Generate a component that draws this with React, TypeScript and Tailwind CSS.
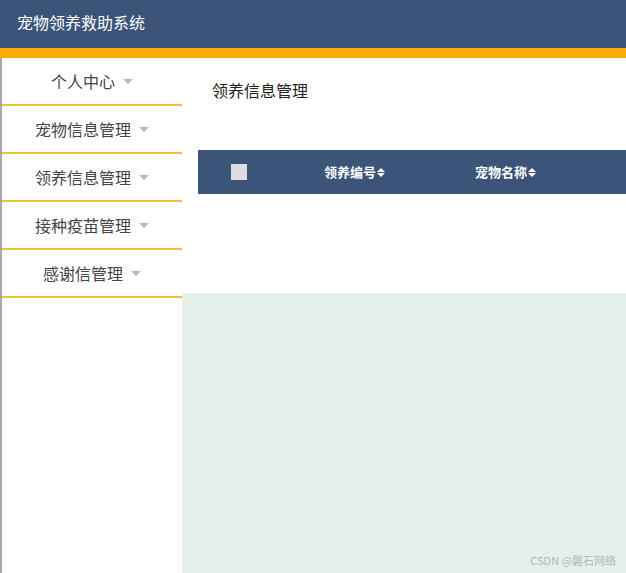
const font = { fontFamily: '"Noto Sans CJK SC", "Liberation Sans", sans-serif' }

function Caret() {
  return <span className="ml-2 inline-block h-0 w-0 border-x-[5px] border-t-[5px] border-x-transparent border-t-[#bbbbbb] align-middle" />
}

function SortIcon() {
  return (
    <span className="ml-[1px] inline-flex flex-col gap-[1px] align-middle">
      <span className="h-0 w-0 border-x-[4px] border-b-[4px] border-x-transparent border-b-white" />
      <span className="h-0 w-0 border-x-[4px] border-t-[4px] border-x-transparent border-t-white" />
    </span>
  )
}

const menu = ['个人中心', '宠物信息管理', '领养信息管理', '接种疫苗管理', '感谢信管理']

export default function App() {
  return (
    <div className="flex h-[573px] w-[626px] flex-col overflow-hidden bg-white" style={font}>
      {/* Header */}
      <div className="flex h-[48px] shrink-0 items-center bg-[#3d5479] pb-[4px] pl-[17px] text-[16px] text-white">
        宠物领养救助系统
      </div>
      <div className="h-[10px] shrink-0 bg-[#fbab00]" />

      <div className="flex flex-1">
        {/* Sidebar */}
        <div className="w-[182px] shrink-0 border-l-2 border-[#a8a8a8] bg-white">
          {menu.map((m) => (
            <div
              key={m}
              className="flex h-[48px] items-center justify-center border-b-2 border-[#f2be35] text-[16px] text-[#444]"
            >
              {m}
              <Caret />
            </div>
          ))}
        </div>

        {/* Main */}
        <div className="flex flex-1 flex-col">
          <div className="h-[235px] bg-white">
            <div className="pl-[30px] pt-[20px] text-[16px] text-[#222]">领养信息管理</div>
            <div className="ml-[16px] mt-[48px] flex h-[44px] items-center bg-[#3d5479] text-[13px] font-bold text-white">
              <div className="ml-[33px] h-[16px] w-[16px] bg-[#dcdde0]" />
              <div className="ml-[77px] flex items-center">
                领养编号
                <SortIcon />
              </div>
              <div className="ml-[90px] flex items-center">
                宠物名称
                <SortIcon />
              </div>
            </div>
          </div>
          <div className="relative flex-1 bg-[#e4f1eb]">
            <div className="absolute bottom-[5px] right-[10px] text-[11px] text-[#b0b8b4]">CSDN @磐石网络</div>
          </div>
        </div>
      </div>
    </div>
  )
}
